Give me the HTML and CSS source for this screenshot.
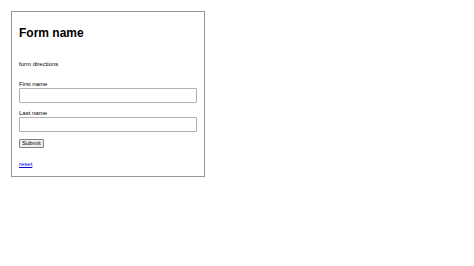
FILE: index.html
```html
<!DOCTYPE html>
<html>
<head>
	<title>Form name</title>
	<link rel="stylesheet" href="styles.css">
</head>
<body>
	<div class="form-box">
		<h1 class="form-title">Form name</h1>
		<p class="directions">form directions</p>

		<form class="fields" onsubmit="return false">
			<label for="first">First name</label>
			<input type="text" id="first" class="field">

			<label for="last">Last name</label>
			<input type="text" id="last" class="field">

			<button type="submit" class="submit">Submit</button>
		</form>

		<a href="#" class="reset">reset</a>
	</div>
</body>
</html>
```

FILE: styles.css
```css
body {
	margin: 0;
	padding: 0;
	font-family: "Liberation Sans", Arial, sans-serif;
	font-size: 6px;
	line-height: 7px;
	color: #000;
	background-color: #fff;
}

.form-box {
	width: 178px;
	margin: 11px;
	padding: 7px 7px 8px 7px;
	border: 1px solid #959595;
}

.form-title {
	margin: 7px 0 0 0;
	font-size: 12px;
	line-height: 14px;
	font-weight: bold;
}

.directions {
	margin: 21px 0 0 0;
}

.fields {
	margin: 13px 0 0 0;
}

.fields label {
	display: block;
}

.field {
	display: block;
	box-sizing: border-box;
	width: 178px;
	height: 15px;
	margin: 0 0 7px 0;
	padding: 0 2px;
	border: 1px solid #b0b0b0;
	border-radius: 1px;
	font-size: 6px;
}

.submit {
	display: block;
	box-sizing: border-box;
	height: 9px;
	margin-top: 7px;
	padding: 0 2px;
	font-family: "Liberation Sans", Arial, sans-serif;
	font-size: 6px;
	line-height: 7px;
	border: 1px solid #808080;
	border-radius: 1px;
	background-color: #efefef;
	color: #000;
}

.reset {
	display: inline-block;
	margin-top: 13px;
	color: #0000ee;
}
```
